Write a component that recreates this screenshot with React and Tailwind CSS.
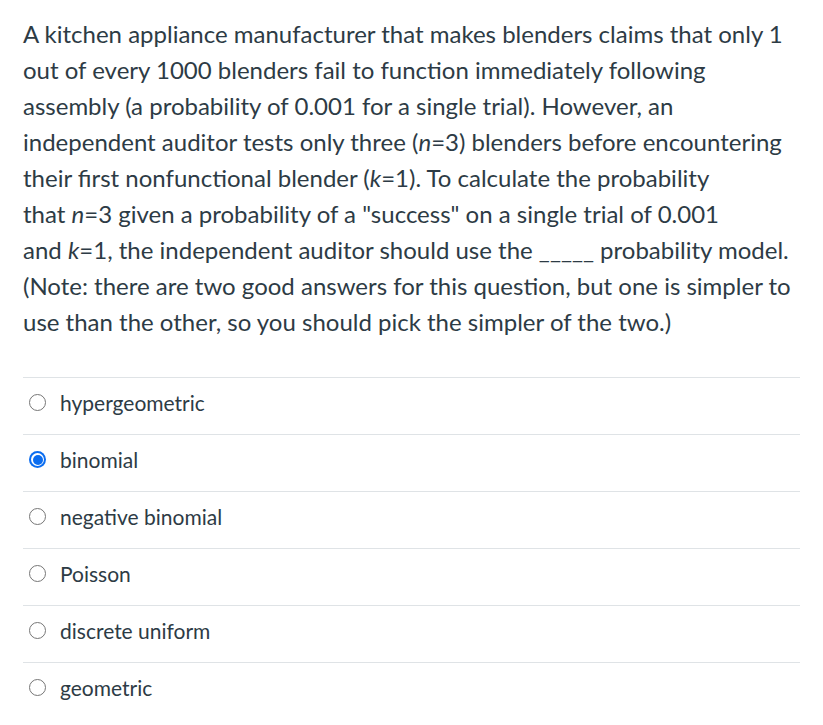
import React from "react";

const lines = [
  <>A kitchen appliance manufacturer that makes blenders claims that only 1</>,
  <>out of every 1000 blenders fail to function immediately following</>,
  <>assembly (a probability of 0.001 for a single trial). However, an</>,
  <>independent auditor tests only three (<i>n</i>=3) blenders before encountering</>,
  <>their first nonfunctional blender (<i>k</i>=1). To calculate the probability</>,
  <>that <i>n</i>=3 given a probability of a "success" on a single trial of 0.001</>,
  <>and <i>k</i>=1, the independent auditor should use the _____ probability model.</>,
  <>(Note: there are two good answers for this question, but one is simpler to</>,
  <>use than the other, so you should pick the simpler of the two.)</>,
];

const options = [
  "hypergeometric",
  "binomial",
  "negative binomial",
  "Poisson",
  "discrete uniform",
  "geometric",
];

function Radio({ checked }) {
  if (checked) {
    return (
      <span className="w-[17px] h-[17px] rounded-full bg-[#0b6df0] flex items-center justify-center shrink-0">
        <span className="w-[13px] h-[13px] rounded-full bg-white flex items-center justify-center">
          <span className="w-[10px] h-[10px] rounded-full bg-[#0b6df0]" />
        </span>
      </span>
    );
  }
  return <span className="w-[17px] h-[17px] rounded-full border border-[#767676] bg-white shrink-0" />;
}

export default function App() {
  return (
    <div className="bg-white w-[823px] h-[725px] text-[#2d3b45]" style={{ fontFamily: "Lato, 'Noto Sans', sans-serif" }}>
      <div className="pl-[23px] pt-[16px] text-[24px] leading-[36px]">
        {lines.map((l, i) => (
          <div key={i} className="whitespace-nowrap">{l}</div>
        ))}
      </div>
      <div className="mt-[37px] ml-[23px] w-[777px]">
        {options.map((o, i) => (
          <div key={o} className="border-t border-[#dfe3e6] h-[57px] flex items-center pl-[6px] gap-[14px] pb-[7px]">
            <Radio checked={i === 1} />
            <span className="text-[21px]">{o}</span>
          </div>
        ))}
      </div>
    </div>
  );
}
